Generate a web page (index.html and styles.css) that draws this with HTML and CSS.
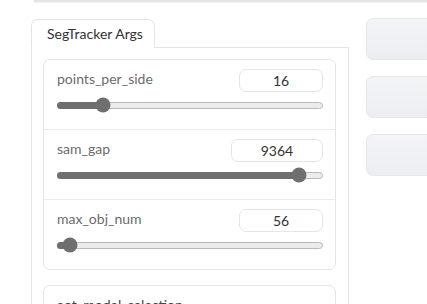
FILE: index.html
```html
<!DOCTYPE html>
<html>
<head>
<meta charset="utf-8">
<link rel="stylesheet" href="styles.css">
</head>
<body>
<div class="topbar"></div>
<div class="main">
  <div class="left">
    <div class="tabs">
      <div class="tab">SegTracker Args</div>
    </div>
    <div class="panel">
      <div class="group">
        <div class="row">
          <div class="head">
            <span class="label">points_per_side</span>
            <div class="num">16</div>
          </div>
          <div class="slider"><div class="track"><div class="fill" style="width:17%"></div><div class="thumb" style="left:17%"></div></div></div>
        </div>
        <div class="row">
          <div class="head">
            <span class="label">sam_gap</span>
            <div class="num wide">9364</div>
          </div>
          <div class="slider"><div class="track"><div class="fill" style="width:91.4%"></div><div class="thumb" style="left:91.4%"></div></div></div>
        </div>
        <div class="row">
          <div class="head">
            <span class="label">max_obj_num</span>
            <div class="num">56</div>
          </div>
          <div class="slider"><div class="track"><div class="fill" style="width:4.5%"></div><div class="thumb" style="left:4.5%"></div></div></div>
        </div>
      </div>
      <div class="group next">
        <div class="row last">
          <span class="label dark">aot_model_selection</span>
        </div>
      </div>
    </div>
  </div>
  <div class="right">
    <div class="btn"></div>
    <div class="btn"></div>
    <div class="btn"></div>
  </div>
</div>
</body>
</html>
```
FILE: styles.css
```css
html, body {
  margin: 0;
  padding: 0;
  background: #ffffff;
  overflow: hidden;
  width: 427px;
  height: 304px;
  font-family: Lato, "Open Sans", sans-serif;
}
.topbar {
  margin-left: 34px;
  height: 2px;
  background: #e4e4e4;
  box-shadow: 0 1px 1px rgba(0,0,0,0.05);
}
.main {
  display: flex;
  gap: 17px;
  padding-left: 31px;
}
.left {
  width: 318px;
  flex: none;
}
.tabs {
  display: flex;
  padding-top: 17px;
}
.tab {
  position: relative;
  z-index: 1;
  width: 124px;
  height: 29px;
  box-sizing: border-box;
  border: 1px solid #e5e5e5;
  border-bottom: 1px solid #ffffff;
  border-radius: 7px 7px 0 0;
  margin-bottom: -1px;
  background: #fff;
  font-size: 14px;
  color: #333;
  padding-left: 15px;
  line-height: 27px;
}
.panel {
  border: 1px solid #e5e5e5;
  border-bottom: none;
  padding: 11px 12px 0 11px;
  height: 260px;
}
.group {
  border: 1px solid #e5e5e5;
  border-radius: 7px;
  background: #fff;
}
.group.next {
  margin-top: 15px;
  border-radius: 7px 7px 0 0;
}
.row {
  padding: 9px 12px 17px 13px;
  border-bottom: 1px solid #ebebeb;
}
.row:last-child {
  border-bottom: none;
}
.row.last {
  padding-top: 10px;
}
.head {
  display: flex;
  justify-content: space-between;
  align-items: center;
  height: 23px;
}
.label {
  font-size: 14px;
  color: #6b6b6b;
  margin-top: -4px;
}
.label.dark {
  color: #444;
  display: block;
  margin-top: 0;
  line-height: 17px;
}
.num {
  width: 84px;
  height: 23px;
  box-sizing: border-box;
  border: 1px solid #e5e5e5;
  border-radius: 7px;
  font-size: 14px;
  color: #333;
  text-align: center;
  line-height: 21px;
}
.num.wide {
  width: 92px;
}
.slider {
  margin-top: 6px;
  height: 14px;
  display: flex;
  align-items: center;
}
.track {
  position: relative;
  width: 100%;
  height: 7px;
  box-sizing: border-box;
  background: #ececec;
  border: 1px solid #b9b9b9;
  border-radius: 4px;
}
.fill {
  position: absolute;
  left: -1px;
  top: -1px;
  height: 7px;
  background: #6f6f6f;
  border-radius: 4px 0 0 4px;
}
.thumb {
  position: absolute;
  top: 50%;
  width: 15px;
  height: 15px;
  border-radius: 50%;
  background: #6f6f6f;
  transform: translate(-50%, -50%);
}
.right {
  display: flex;
  flex-direction: column;
  gap: 16px;
  padding-top: 16px;
  flex: 1;
}
.btn {
  height: 42px;
  width: 80px;
  box-sizing: border-box;
  border: 1px solid #e6e7ea;
  border-radius: 7px;
  background: linear-gradient(#f3f4f6, #eceef1);
}
```
